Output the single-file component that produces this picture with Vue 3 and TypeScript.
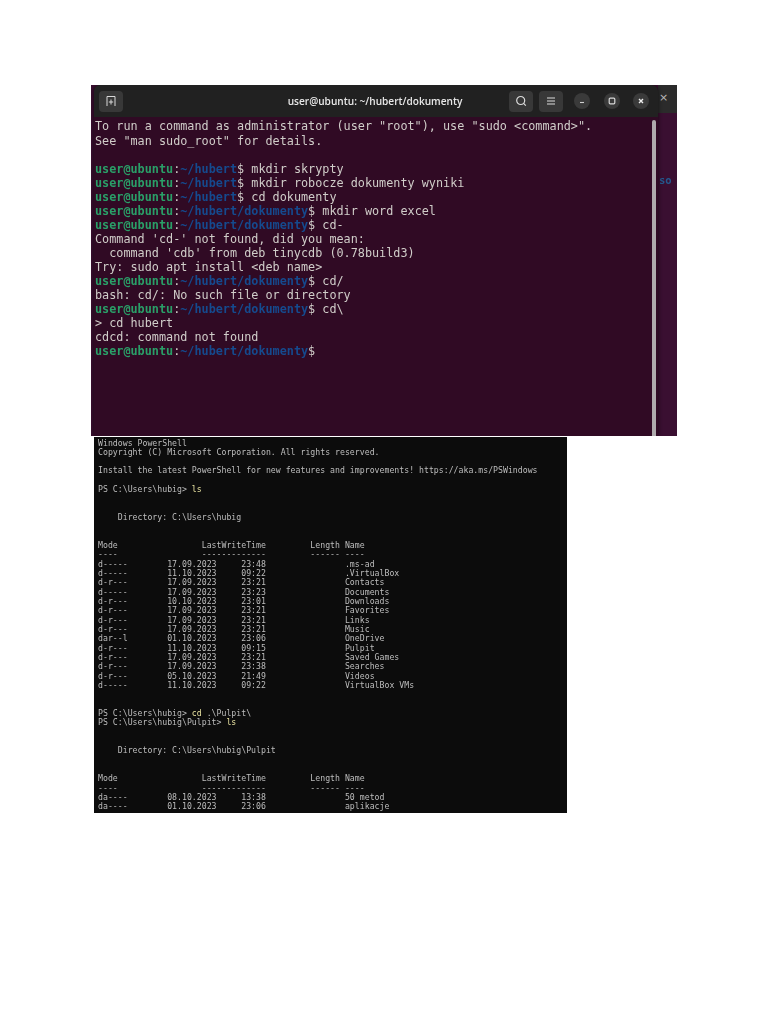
<script setup lang="ts">
type Part = { t: string; c?: string };
const prompt = (path: string, cmd = ""): Part[] => [
  { t: "user@ubuntu", c: "green" },
  { t: ":" },
  { t: path, c: "blue" },
  { t: "$ " + cmd },
];
const term: Part[][] = [
  [{ t: 'To run a command as administrator (user "root"), use "sudo <command>".' }],
  [{ t: 'See "man sudo_root" for details.' }],
  [{ t: " " }],
  prompt("~/hubert", "mkdir skrypty"),
  prompt("~/hubert", "mkdir robocze dokumenty wyniki"),
  prompt("~/hubert", "cd dokumenty"),
  prompt("~/hubert/dokumenty", "mkdir word excel"),
  prompt("~/hubert/dokumenty", "cd-"),
  [{ t: "Command 'cd-' not found, did you mean:" }],
  [{ t: "  command 'cdb' from deb tinycdb (0.78build3)" }],
  [{ t: "Try: sudo apt install <deb name>" }],
  prompt("~/hubert/dokumenty", "cd/"),
  [{ t: "bash: cd/: No such file or directory" }],
  prompt("~/hubert/dokumenty", "cd\\"),
  [{ t: "> cd hubert" }],
  [{ t: "cdcd: command not found" }],
  prompt("~/hubert/dokumenty"),
];
const row = (m: string, d: string, h: string, n: string): Part[] => [
  { t: `${m}        ${d}     ${h}                ${n}` },
];
const head: Part[][] = [
  [{ t: "Mode                 LastWriteTime         Length Name" }],
  [{ t: "----                 -------------         ------ ----" }],
];
const ps: Part[][] = [
  [{ t: "Windows PowerShell" }],
  [{ t: "Copyright (C) Microsoft Corporation. All rights reserved." }],
  [{ t: " " }],
  [{ t: "Install the latest PowerShell for new features and improvements! https://aka.ms/PSWindows" }],
  [{ t: " " }],
  [{ t: "PS C:\\Users\\hubig> " }, { t: "ls", c: "yellow" }],
  [{ t: " " }],
  [{ t: " " }],
  [{ t: "    Directory: C:\\Users\\hubig" }],
  [{ t: " " }],
  [{ t: " " }],
  ...head,
  row("d-----", "17.09.2023", "23:48", ".ms-ad"),
  row("d-----", "11.10.2023", "09:22", ".VirtualBox"),
  row("d-r---", "17.09.2023", "23:21", "Contacts"),
  row("d-----", "17.09.2023", "23:23", "Documents"),
  row("d-r---", "10.10.2023", "23:01", "Downloads"),
  row("d-r---", "17.09.2023", "23:21", "Favorites"),
  row("d-r---", "17.09.2023", "23:21", "Links"),
  row("d-r---", "17.09.2023", "23:21", "Music"),
  row("dar--l", "01.10.2023", "23:06", "OneDrive"),
  row("d-r---", "11.10.2023", "09:15", "Pulpit"),
  row("d-r---", "17.09.2023", "23:21", "Saved Games"),
  row("d-r---", "17.09.2023", "23:38", "Searches"),
  row("d-r---", "05.10.2023", "21:49", "Videos"),
  row("d-----", "11.10.2023", "09:22", "VirtualBox VMs"),
  [{ t: " " }],
  [{ t: " " }],
  [{ t: "PS C:\\Users\\hubig> " }, { t: "cd", c: "yellow" }, { t: " .\\Pulpit\\" }],
  [{ t: "PS C:\\Users\\hubig\\Pulpit> " }, { t: "ls", c: "yellow" }],
  [{ t: " " }],
  [{ t: " " }],
  [{ t: "    Directory: C:\\Users\\hubig\\Pulpit" }],
  [{ t: " " }],
  [{ t: " " }],
  ...head,
  row("da----", "08.10.2023", "13:38", "50 metod"),
  row("da----", "01.10.2023", "23:06", "aplikacje"),
];
</script>

<template>
  <main class="page">
    <section class="ubuntu">
      <div class="window">
        <header class="titlebar">
          <div class="bar-left">
            <button class="tool">
              <svg width="12" height="12" viewBox="0 0 12 12" fill="none" stroke="#d8d8d8" stroke-width="1">
                <path d="M2 11V1.5h8V11M6 4.5v5M3.8 7h4.4" />
              </svg>
            </button>
          </div>
          <span class="title">user@ubuntu: ~/hubert/dokumenty</span>
          <div class="bar-right">
            <button class="tool">
              <svg width="14" height="14" viewBox="0 0 14 14" fill="none" stroke="#dcdcdc" stroke-width="1.2">
                <circle cx="6.7" cy="6.5" r="4" />
                <path d="M9.6 9.4l2.2 2.2" />
              </svg>
            </button>
            <button class="tool">
              <svg width="12" height="12" viewBox="0 0 12 12" fill="none" stroke="#dcdcdc" stroke-width="1.1">
                <path d="M2 3h8M2 6h8M2 9h8" />
              </svg>
            </button>
            <div class="controls">
              <span class="round">
                <svg width="10" height="10" viewBox="0 0 10 10" stroke="#d0d0d0" stroke-width="1.1"><path d="M3 6.5h4" /></svg>
              </span>
              <span class="round">
                <svg width="10" height="10" viewBox="0 0 10 10" fill="none" stroke="#d8d8d8" stroke-width="1.2"><rect x="2.2" y="2.2" width="5.6" height="5.6" rx="1" /></svg>
              </span>
              <span class="round">
                <svg width="10" height="10" viewBox="0 0 10 10" stroke="#eeeeee" stroke-width="1.4"><path d="M3 3l4 4M7 3l-4 4" /></svg>
              </span>
            </div>
          </div>
        </header>
        <div class="term">
          <div v-for="(line, i) in term" :key="i" class="tline">
            <span v-for="(p, j) in line" :key="j" :class="p.c">{{ p.t }}</span>
          </div>
        </div>
        <div class="scrollbar"></div>
      </div>
      <aside class="behind">
        <div class="behind-bar">×</div>
        <div class="behind-text">so</div>
      </aside>
    </section>
    <section class="powershell">
      <div class="ps-text">
        <div v-for="(line, i) in ps" :key="i" class="pline">
          <span v-for="(p, j) in line" :key="j" :class="p.c">{{ p.t }}</span>
        </div>
      </div>
    </section>
  </main>
</template>

<style>
html, body { background: #ffffff; }
</style>

<style scoped>
.page {
  width: 768px;
  height: 1024px;
  padding: 85px 0 0 91px;
  box-sizing: border-box;
  background: #ffffff;
  overflow: hidden;
}
.ubuntu {
  width: 586px;
  height: 351px;
  display: flex;
  padding-left: 3px;
  box-sizing: border-box;
  background: #3a0f31;
  overflow: hidden;
}
.window {
  position: relative;
  width: 564px;
  flex: none;
  background: #300a24;
  box-shadow: 0 0 4px rgba(0, 0, 0, 0.65);
  border-radius: 6px 6px 0 0;
  z-index: 1;
}
.titlebar {
  height: 32px;
  background: #212121;
  border-radius: 6px 6px 0 0;
  display: grid;
  grid-template-columns: 1fr auto 1fr;
  align-items: center;
  padding: 0 9px 0 5px;
  box-sizing: border-box;
}
.bar-left {
  display: flex;
}
.bar-right {
  display: flex;
  align-items: center;
  justify-content: flex-end;
  gap: 6px;
}
.tool {
  width: 24px;
  height: 21px;
  border: 0;
  padding: 0;
  border-radius: 4px;
  background: #383838;
  display: flex;
  align-items: center;
  justify-content: center;
  flex: none;
}
.title {
  text-align: center;
  color: #e8e8e8;
  font: 600 10.1px "Open Sans", sans-serif;
  padding-left: 2px;
  white-space: nowrap;
  filter: blur(0.3px);
}
.controls {
  display: flex;
  gap: 13.5px;
  margin-left: 5px;
}
.round {
  width: 16px;
  height: 16px;
  border-radius: 50%;
  background: #3a3a3a;
  display: flex;
  align-items: center;
  justify-content: center;
}
.term {
  padding: 2.45px 0 0 1px;
  font: 11.8px/14.07px "DejaVu Sans Mono", monospace;
  color: #d0cdc9;
  filter: blur(0.4px);
}
.tline, .pline {
  white-space: pre;
}
.green { color: #2a9f68; font-weight: 700; }
.blue { color: #154a8e; font-weight: 700; }
.scrollbar {
  position: absolute;
  right: 2px;
  top: 35px;
  bottom: 0;
  width: 4px;
  border-radius: 2px 2px 0 0;
  background: #aeaaac;
}
.behind {
  flex: 1;
  display: flex;
  flex-direction: column;
}
.behind-bar {
  height: 28px;
  background: #2b2b2b;
  color: #b8b8b8;
  font: 11px/25px "DejaVu Sans", sans-serif;
  padding-left: 1px;
}
.behind-text {
  margin-top: 60px;
  padding-left: 1px;
  color: #24598f;
  font: 700 10.5px/14px "DejaVu Sans Mono", monospace;
  filter: blur(0.5px);
}
.powershell {
  width: 473px;
  height: 376px;
  margin: 1px 0 0 3px;
  background: #0c0c0c;
  overflow: hidden;
}
.ps-text {
  padding: 1.5px 0 0 4px;
  font: 8.21px/9.33px "DejaVu Sans Mono", monospace;
  color: #bdbdbd;
  filter: blur(0.4px);
}
.yellow { color: #e8e2a0; }
</style>
